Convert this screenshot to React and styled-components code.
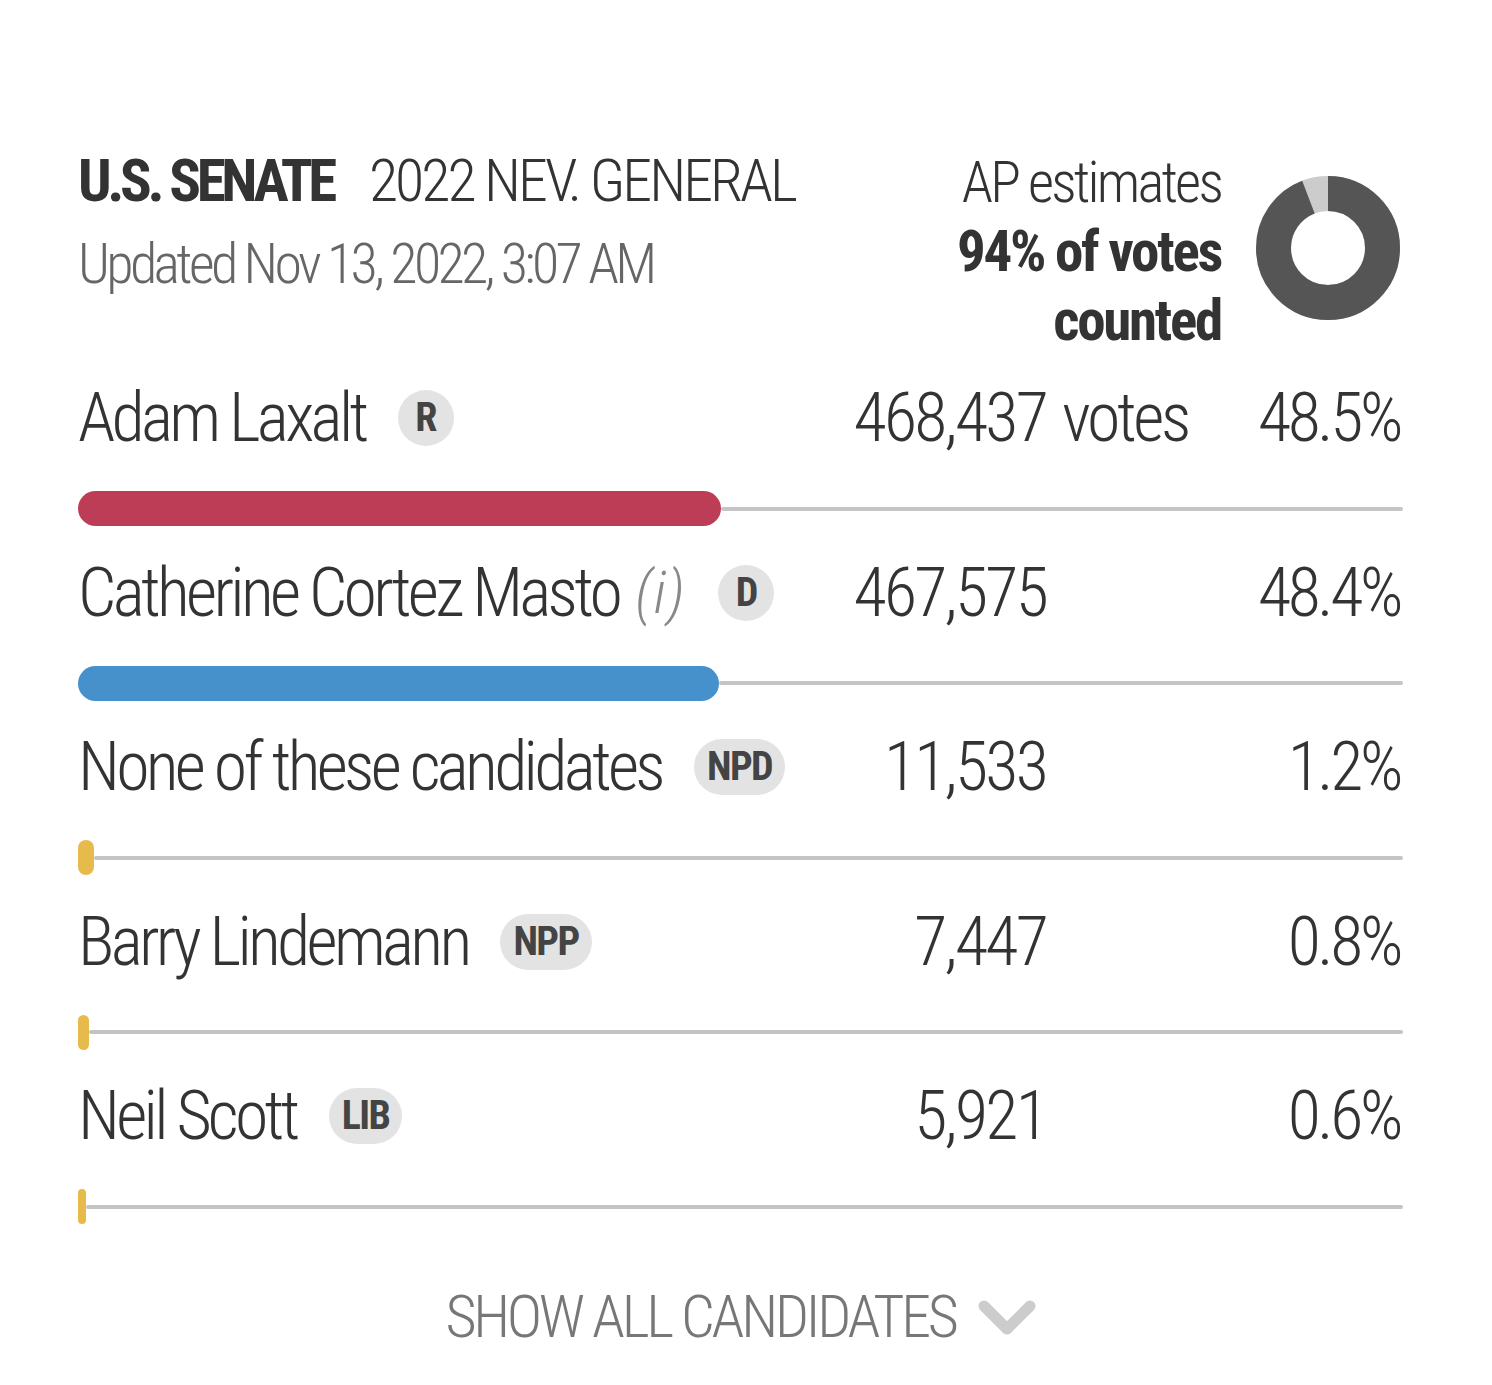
import React from "react";
import styled, { createGlobalStyle } from "styled-components";

const FONT = `"Roboto Condensed", "Liberation Sans Narrow", "DejaVu Sans Condensed", "Liberation Sans", sans-serif`;

const GlobalStyle = createGlobalStyle`
  html, body { margin: 0; padding: 0; background: #fff; }
  body { font-family: ${FONT}; color: #333; }
`;

const Page = styled.div`
  width: 1492px;
  min-height: 1385px;
  box-sizing: border-box;
  padding: 141px 89px 0 78px;
`;

const Header = styled.header`
  display: flex;
  justify-content: space-between;
  align-items: flex-start;
  height: 237px;
`;

const TitleBlock = styled.div`
  display: flex;
  flex-direction: column;
`;

const Title = styled.div`
  font-size: 60px;
  line-height: 80px;
  font-weight: 300;
  color: #333;
  white-space: nowrap;
  letter-spacing: -0.05em;
`;

const TitleStrong = styled.span`
  font-weight: 700;
  font-size: 59px;
  letter-spacing: -0.075em;
  margin-right: 36px;
`;

const Updated = styled.div`
  margin-top: 3px;
  font-size: 56px;
  line-height: 80px;
  font-weight: 300;
  color: #666;
  white-space: nowrap;
  letter-spacing: -0.065em;
`;

const Estimate = styled.div`
  display: flex;
  align-items: center;
  gap: 35px;
  margin-right: 3px;
`;

const EstimateText = styled.div`
  margin-top: 7px;
  font-size: 57px;
  line-height: 69px;
  font-weight: 300;
  text-align: right;
  color: #333;
  white-space: nowrap;
  letter-spacing: -0.05em;
`;

const Strong = styled.strong`
  font-weight: 700;
  letter-spacing: -0.04em;
`;

const Row = styled.div`
  display: flex;
  flex-direction: column;
  margin-bottom: 26.5px;
`;

const Line = styled.div`
  display: grid;
  grid-template-columns: minmax(0, 1fr) 220px 357px;
  align-items: center;
  height: 80px;
  font-size: 68px;
  line-height: 80px;
  font-weight: 300;
  color: #333;
  letter-spacing: -0.055em;
`;

const NameCell = styled.div`
  display: flex;
  align-items: center;
  white-space: nowrap;
`;

const Incumbent = styled.span`
  margin-left: 16px;
  font-size: 59px;
  font-style: italic;
  font-weight: 300;
  color: #888;
  letter-spacing: 0.03em;
`;

const Badge = styled.span`
  margin-left: 32px;
  height: 56px;
  min-width: 56px;
  box-sizing: border-box;
  padding: 0 13px;
  border-radius: 28px;
  background: #e3e3e3;
  color: #444;
  font-size: 40px;
  font-weight: 700;
  line-height: 56px;
  text-align: center;
  letter-spacing: -0.04em;
`;

const Votes = styled.div`
  text-align: right;
  white-space: nowrap;
  letter-spacing: -0.04em;
`;

const PctCell = styled.div`
  display: flex;
  justify-content: space-between;
  white-space: nowrap;
  padding-right: 3px;
  letter-spacing: -0.05em;
`;

const Suffix = styled.span`
  padding-left: 16px;
`;

const Track = styled.div`
  margin-top: 33px;
  height: 35px;
  display: flex;
  align-items: center;
`;

const Fill = styled.div`
  height: 35px;
  flex: none;
  border-radius: 18px;
  background: ${(p) => p.$color};
`;

const Rule = styled.div`
  flex: 1;
  height: 4px;
  border-radius: 2px;
  background: #c4c4c4;
`;

const Footer = styled.div`
  margin-top: 53px;
  display: flex;
  justify-content: center;
  align-items: center;
  gap: 22px;
  font-size: 60px;
  line-height: 80px;
  font-weight: 300;
  color: #777;
  letter-spacing: -0.055em;
`;

const Donut = () => {
  const r = 54.5;
  const c = 2 * Math.PI * r;
  return (
    <svg width="144" height="144" viewBox="0 0 144 144">
      <circle cx="72" cy="72" r={r} fill="none" stroke="#cccccc" strokeWidth="35" />
      <circle
        cx="72"
        cy="72"
        r={r}
        fill="none"
        stroke="#555555"
        strokeWidth="35"
        strokeDasharray={`${c * 0.94} ${c}`}
        transform="rotate(-90 72 72)"
      />
    </svg>
  );
};

const Chevron = () => (
  <svg width="58" height="36" viewBox="0 0 58 36">
    <polyline
      points="6,7 29,30 52,7"
      fill="none"
      stroke="#cccccc"
      strokeWidth="11"
      strokeLinecap="round"
      strokeLinejoin="round"
    />
  </svg>
);

const TRACK_WIDTH = 1325;

const candidates = [
  { name: "Adam Laxalt", party: "R", votes: "468,437", suffix: "votes", pct: 48.5, color: "#bd3d56" },
  { name: "Catherine Cortez Masto", incumbent: true, party: "D", votes: "467,575", pct: 48.4, color: "#4691cc" },
  { name: "None of these candidates", party: "NPD", votes: "11,533", pct: 1.2, color: "#e6ba4b" },
  { name: "Barry Lindemann", party: "NPP", votes: "7,447", pct: 0.8, color: "#e6ba4b" },
  { name: "Neil Scott", party: "LIB", votes: "5,921", pct: 0.6, color: "#e6ba4b" },
];

export default function App() {
  return (
    <>
      <GlobalStyle />
      <Page>
        <Header>
          <TitleBlock>
            <Title>
              <TitleStrong>U.S. SENATE</TitleStrong>2022 NEV. GENERAL
            </Title>
            <Updated>Updated Nov 13, 2022, 3:07 AM</Updated>
          </TitleBlock>
          <Estimate>
            <EstimateText>
              AP estimates
              <br />
              <Strong>94% of votes</Strong>
              <br />
              <Strong>counted</Strong>
            </EstimateText>
            <Donut />
          </Estimate>
        </Header>

        {candidates.map((c) => (
          <Row key={c.name}>
            <Line>
              <NameCell>
                {c.name}
                {c.incumbent && <Incumbent>(i)</Incumbent>}
                <Badge>{c.party}</Badge>
              </NameCell>
              <Votes>{c.votes}</Votes>
              <PctCell>
                <Suffix>{c.suffix || ""}</Suffix>
                <span>{c.pct.toFixed(1)}%</span>
              </PctCell>
            </Line>
            <Track>
              <Fill $color={c.color} style={{ width: `${(c.pct / 100) * TRACK_WIDTH}px` }} />
              <Rule />
            </Track>
          </Row>
        ))}

        <Footer>
          <span>SHOW ALL CANDIDATES</span>
          <Chevron />
        </Footer>
      </Page>
    </>
  );
}
